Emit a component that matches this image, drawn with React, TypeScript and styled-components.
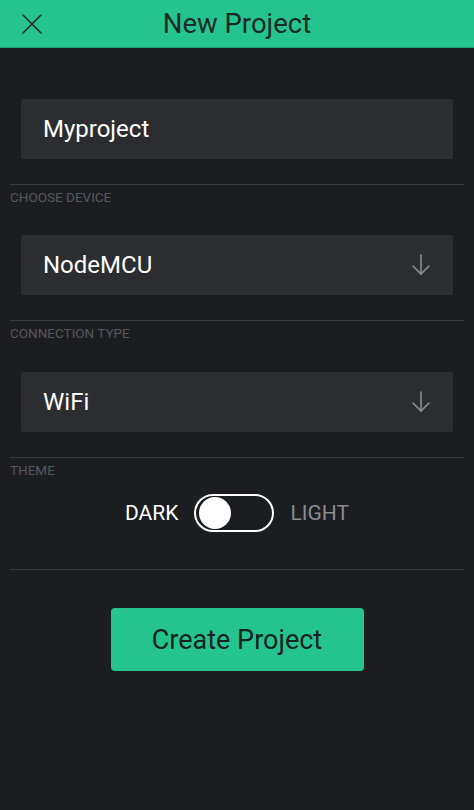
import React from "react";
import styled, { createGlobalStyle } from "styled-components";

const Global = createGlobalStyle`
  html, body { margin: 0; padding: 0; background: #1c1d21; }
  body { font-family: "Roboto", "Liberation Sans", sans-serif; }
  #root { width: 474px; min-height: 810px; background: #1c1d21; }
`;

const Page = styled.div`
  width: 474px;
  height: 810px;
  background: #1c1d21;
  display: flex;
  flex-direction: column;
  overflow: hidden;
`;

const Header = styled.header`
  height: 47px;
  background: #25c48f;
  border-bottom: 1px solid #1f9e74;
  display: grid;
  grid-template-columns: 64px 1fr 64px;
  align-items: center;
`;

const CloseBtn = styled.div`
  display: flex;
  align-items: center;
  justify-content: flex-start;
  padding-left: 22px;
  height: 100%;
`;

const Title = styled.h1`
  margin: 0;
  text-align: center;
  font-weight: 400;
  font-size: 27.5px;
  color: #1a2a24;
  line-height: 42px;
`;

const Content = styled.main`
  display: flex;
  flex-direction: column;
  padding: 51px 10px 0;
`;

const Field = styled.div`
  margin: 0 11px;
  height: 60px;
  background: #2c2d31;
  border-radius: 2px;
  display: flex;
  align-items: center;
  justify-content: space-between;
  padding: 0 22px 0 22px;
  color: #ffffff;
  font-size: 24px;
  font-weight: 400;
`;

const Divider = styled.div<{ $top: number }>`
  height: 1px;
  background: #393a3e;
  margin-top: ${(p) => p.$top}px;
`;

const Label = styled.div<{ $bottom: number }>`
  font-size: 13.5px;
  color: #55565b;
  text-transform: uppercase;
  margin-top: 5px;
  margin-bottom: ${(p) => p.$bottom}px;
  line-height: 15px;
`;

const ThemeRow = styled.div`
  display: flex;
  align-items: center;
  justify-content: center;
  gap: 16px;
  height: 38px;
  margin-top: 16px;
`;

const ThemeText = styled.span<{ $active?: boolean }>`
  font-size: 21px;
  color: ${(p) => (p.$active ? "#ffffff" : "#8a8b8f")};
`;

const Switch = styled.div`
  width: 80px;
  height: 38px;
  box-sizing: border-box;
  border: 2px solid #ffffff;
  border-radius: 19px;
  display: flex;
  align-items: center;
  padding-left: 3px;
`;

const Knob = styled.div`
  width: 32px;
  height: 32px;
  border-radius: 50%;
  background: #ffffff;
`;

const ButtonWrap = styled.div`
  display: flex;
  justify-content: center;
  margin-top: 38px;
`;

const CreateButton = styled.button`
  width: 253px;
  height: 63px;
  background: #25c48f;
  border: none;
  border-radius: 4px;
  font-family: inherit;
  font-size: 27px;
  color: #14231d;
  font-weight: 400;
`;

const Arrow = () => (
  <svg width="20" height="24" viewBox="0 0 20 24" fill="none" stroke="#8d8e92" strokeWidth="1.6" strokeLinecap="round">
    <path d="M10 2 V21" />
    <path d="M2 13 L10 21 L18 13" />
  </svg>
);

export default function App() {
  return (
    <Page>
      <Global />
      <Header>
        <CloseBtn>
          <svg width="20" height="20" viewBox="0 0 20 20" stroke="#1a2a24" strokeWidth="1.6" strokeLinecap="round">
            <path d="M1 1 L19 19 M19 1 L1 19" />
          </svg>
        </CloseBtn>
        <Title>New Project</Title>
        <div />
      </Header>
      <Content>
        <Field>Myproject</Field>
        <Divider $top={25} />
        <Label $bottom={30}>Choose device</Label>
        <Field>
          NodeMCU
          <Arrow />
        </Field>
        <Divider $top={25} />
        <Label $bottom={31}>Connection type</Label>
        <Field>
          WiFi
          <Arrow />
        </Field>
        <Divider $top={25} />
        <Label $bottom={0}>Theme</Label>
        <ThemeRow>
          <ThemeText $active>DARK</ThemeText>
          <Switch>
            <Knob />
          </Switch>
          <ThemeText>LIGHT</ThemeText>
        </ThemeRow>
        <Divider $top={37} />
        <ButtonWrap>
          <CreateButton>Create Project</CreateButton>
        </ButtonWrap>
      </Content>
    </Page>
  );
}
